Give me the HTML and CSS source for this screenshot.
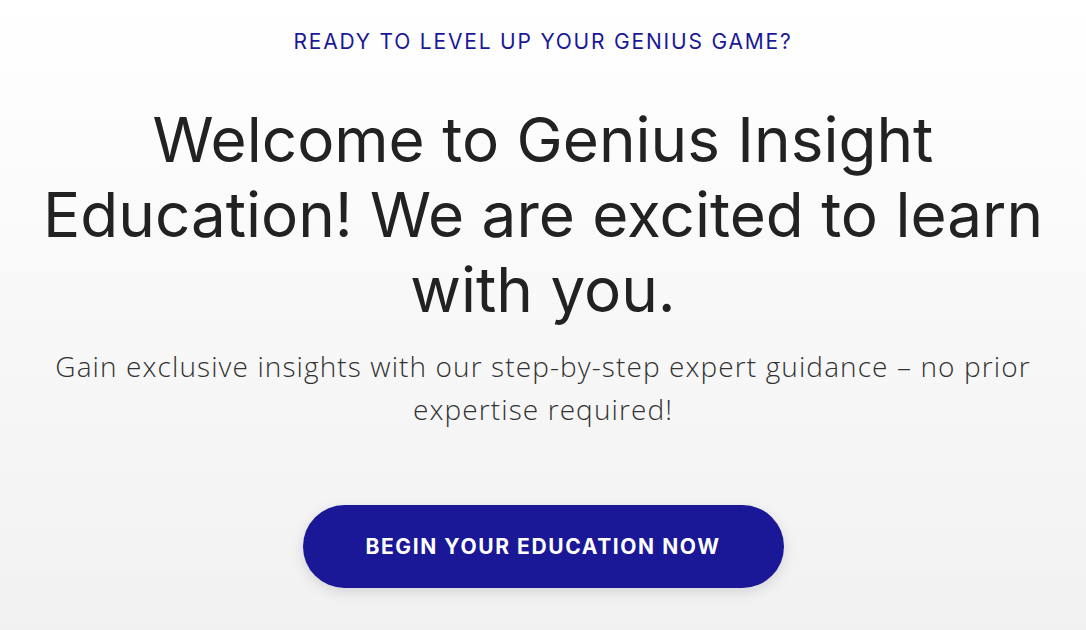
FILE: index.html
```html
<!DOCTYPE html>
<html lang="en">
<head>
    <meta charset="UTF-8">
    <title>Genius Insight Education</title>
    <link rel="stylesheet" href="styles.css">
</head>
<body>
<section class="hero">
    <p class="eyebrow">READY TO LEVEL UP YOUR GENIUS GAME?</p>
    <h1 class="title">Welcome to Genius Insight Education! We are excited to learn with you.</h1>
    <p class="lead">Gain exclusive insights with our step-by-step expert guidance – no prior expertise required!</p>
    <a class="cta" href="#">BEGIN YOUR EDUCATION NOW</a>
</section>
</body>
</html>
```
FILE: styles.css
```css
html,body{margin:0;padding:0;}
body{min-height:630px;background:linear-gradient(#fff,#f1f1f1);font-family:"Lato","Liberation Sans",sans-serif;}
.hero{display:flex;flex-direction:column;align-items:center;text-align:center;padding:28px 20px 0;}
.eyebrow{margin:0;font-family:"Inter","Liberation Sans",sans-serif;font-size:21px;line-height:28px;color:#1a1896;letter-spacing:1.8px;}
.title{margin:46px 0 0;max-width:1030px;font-family:"Inter","Liberation Sans",sans-serif;font-weight:400;font-size:62px;line-height:75px;color:#222;}
.lead{margin:18px 0 0;max-width:1000px;font-family:"Open Sans",sans-serif;font-weight:300;font-size:28px;line-height:43px;color:#333;letter-spacing:1.1px;}
.cta{margin-top:74px;display:flex;align-items:center;justify-content:center;width:481px;height:83px;border-radius:42px;background:#1a1896;color:#fff;text-decoration:none;font-family:"Inter",sans-serif;font-weight:700;font-size:21px;letter-spacing:1.6px;box-shadow:0 4px 14px rgba(0,0,0,0.12);}
```
